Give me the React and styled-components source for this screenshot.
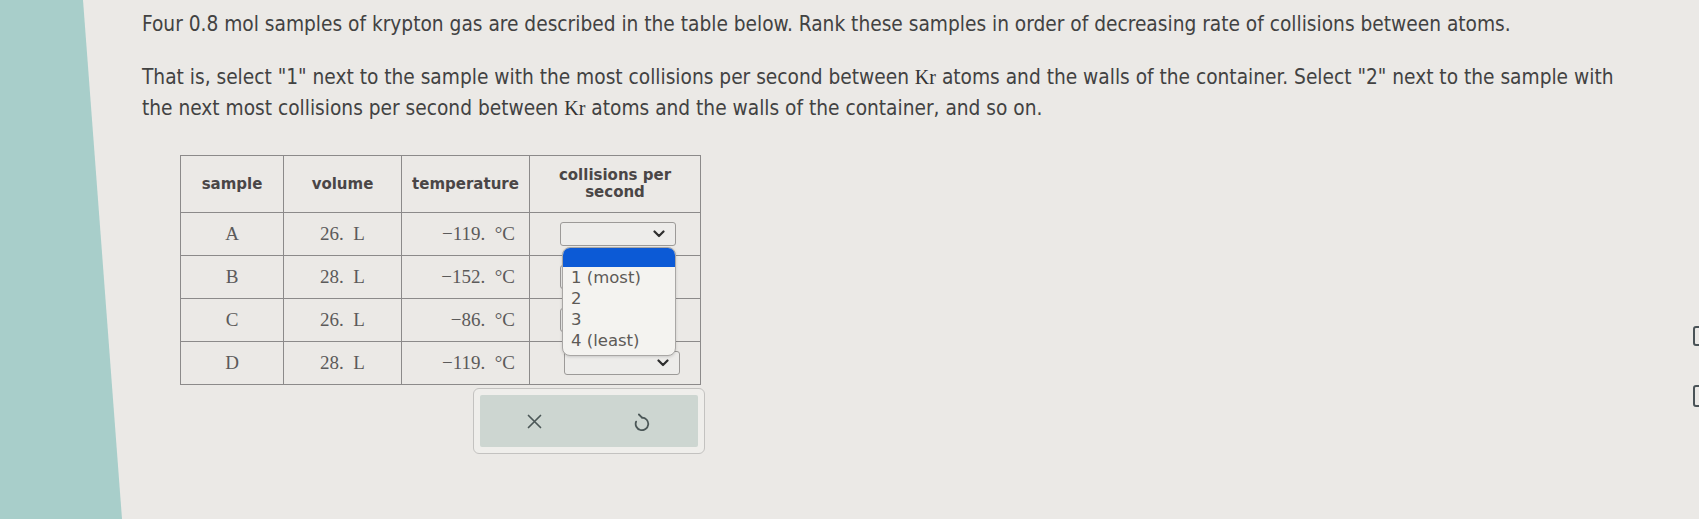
import React from "react";
import styled, { createGlobalStyle } from "styled-components";

const Global = createGlobalStyle`
  html, body { margin: 0; padding: 0; }
  body {
    background: #ebe9e6;
    width: 1699px;
    height: 519px;
    overflow: hidden;
  }
`;

const Page = styled.div`
  display: flex;
  width: 1699px;
  height: 519px;
  position: relative;
  overflow: hidden;
`;

const SideStrip = styled.div`
  flex: 0 0 122px;
  height: 100%;
  background: #a8ceca;
  clip-path: polygon(0 0, 83px 0, 122px 100%, 0 100%);
`;

const Main = styled.main`
  flex: 1;
  padding: 9px 0 0 20px;
  display: flex;
  flex-direction: column;
`;

const Para = styled.p`
  margin: 0 0 ${(p) => p.$gap || 0}px 0;
  max-width: 1490px;
  font-family: "DejaVu Sans Condensed", "DejaVu Sans", sans-serif;
  font-stretch: condensed;
  font-size: 20.7px;
  line-height: 31px;
  color: #424242;
`;

const Chem = styled.span`
  font-family: "Liberation Serif", serif;
  font-size: 20px;
  line-height: 1;
  color: #333;
`;

const Block = styled.div`
  display: flex;
  flex-direction: column;
  align-items: flex-end;
  align-self: flex-start;
  margin-left: 38px;
`;

const Table = styled.table`
  border-collapse: collapse;
  border: 1px solid #8c8a8a;
`;

const Col = styled.col`
  width: ${(p) => p.$w}px;
`;

const Th = styled.th`
  height: 56px;
  border: 1px solid #8c8a8a;
  padding: 0 8px;
  font-family: "DejaVu Sans", sans-serif;
  font-weight: bold;
  font-size: 15px;
  line-height: 17px;
  color: #4a4646;
  text-align: center;
  vertical-align: middle;
`;

const Td = styled.td`
  height: 42px;
  border: 1px solid #8c8a8a;
  padding: 0 ${(p) => (p.$align === "right" ? 14 : 4)}px 0 4px;
  font-family: "Liberation Serif", serif;
  font-size: 19px;
  color: #5b5a5a;
  text-align: ${(p) => p.$align || "center"};
  vertical-align: middle;
  white-space: pre;
  position: relative;
`;

const SelectWrap = styled.div`
  position: relative;
  width: 116px;
  margin: 0 auto;
  left: ${(p) => p.$shift || 0}px;
`;

const SelectBox = styled.div`
  height: 22px;
  border: 1px solid #9c9a98;
  border-radius: 3px;
  background: #edecea;
  display: flex;
  align-items: center;
  justify-content: flex-end;
  padding-right: 10px;
  color: #333;
`;

const Listbox = styled.ul`
  position: absolute;
  top: 25px;
  left: 2px;
  width: 112px;
  margin: 0;
  padding: 0 0 4px;
  list-style: none;
  background: #f4f3f0;
  border: 1px solid #a9a7a5;
  border-radius: 8px;
  overflow: hidden;
  z-index: 2;
  box-shadow: 0 1px 3px rgba(0, 0, 0, 0.15);
`;

const Option = styled.li`
  height: ${(p) => (p.$blank ? 19 : 21)}px;
  line-height: 21px;
  padding-left: 8px;
  background: ${(p) => (p.$active ? "#0c5ad6" : "transparent")};
  font-family: "DejaVu Sans", sans-serif;
  font-size: 16.5px;
  color: #5d5a57;
  text-align: left;
`;

const Actions = styled.div`
  margin-top: 3px;
  width: 232px;
  height: 66px;
  box-sizing: border-box;
  padding: 6px;
  border: 1px solid #c3c2c0;
  border-radius: 6px;
  background: #efeeeb;
  margin-right: -4px;
`;

const ActionInner = styled.div`
  height: 100%;
  background: #cdd6d1;
  border-radius: 2px;
  display: grid;
  grid-template-columns: 1fr 1fr;
  align-items: center;
  justify-items: center;
  color: #4b5757;
`;

const IconButton = styled.button`
  border: 0;
  background: none;
  padding: 0;
  color: inherit;
  display: flex;
  margin-left: ${(p) => p.$ml || 0}px;
`;

const EdgeMark = styled.div`
  position: absolute;
  right: -10px;
  top: ${(p) => p.$top}px;
  width: 12px;
  height: ${(p) => p.$h}px;
  border: 2px solid #4a5357;
  border-radius: 3px;
`;

const Chevron = () => (
  <svg width="12" height="8" viewBox="0 0 12 8">
    <path d="M1.5 1.5 L6 6 L10.5 1.5" fill="none" stroke="#2e2e2e" strokeWidth="2.2" strokeLinecap="round" strokeLinejoin="round" />
  </svg>
);

const XIcon = () => (
  <svg width="15" height="15" viewBox="0 0 15 15">
    <path d="M1.5 1.5 L13.5 13.5 M13.5 1.5 L1.5 13.5" stroke="currentColor" strokeWidth="1.7" strokeLinecap="round" />
  </svg>
);

const UndoIcon = () => (
  <svg width="18" height="19" viewBox="0 0 18 19">
    <path d="M9 5.6 A6.3 6.3 0 1 1 3.1 9.6" fill="none" stroke="currentColor" strokeWidth="1.8" strokeLinecap="round" />
    <path d="M5.9 2.5 L9 5.6" fill="none" stroke="currentColor" strokeWidth="1.8" strokeLinecap="round" />
  </svg>
);

const rows = [
  { s: "A", v: "26.  L", t: "\u2212119.  \u00b0C" },
  { s: "B", v: "28.  L", t: "\u2212152.  \u00b0C" },
  { s: "C", v: "26.  L", t: "\u221286.  \u00b0C" },
  { s: "D", v: "28.  L", t: "\u2212119.  \u00b0C" },
];

export default function App() {
  return (
    <>
      <Global />
      <Page>
        <SideStrip />
        <Main>
          <Para $gap={22}>
            Four 0.8 mol samples of krypton gas are described in the table below. Rank these samples in order of
            decreasing rate of collisions between atoms.
          </Para>
          <Para $gap={31}>
            That is, select "1" next to the sample with the most collisions per second between <Chem>Kr</Chem> atoms
            and the walls of the container. Select "2" next to the sample with the next most collisions per second
            between <Chem>Kr</Chem> atoms and the walls of the container, and so on.
          </Para>
          <Block>
            <Table>
              <colgroup>
                <Col $w={103} />
                <Col $w={118} />
                <Col $w={128} />
                <Col $w={171} />
              </colgroup>
              <thead>
                <tr>
                  <Th>sample</Th>
                  <Th>volume</Th>
                  <Th>temperature</Th>
                  <Th>
                    collisions per
                    <br />
                    second
                  </Th>
                </tr>
              </thead>
              <tbody>
                {rows.map((r, i) => (
                  <tr key={r.s}>
                    <Td>{r.s}</Td>
                    <Td>{r.v}</Td>
                    <Td $align="right">{r.t}</Td>
                    <Td>
                      <SelectWrap $shift={i === 3 ? 7 : 3}>
                        <SelectBox>
                          <Chevron />
                        </SelectBox>
                        {i === 0 && (
                          <Listbox>
                            <Option $active $blank />
                            <Option>1 (most)</Option>
                            <Option>2</Option>
                            <Option>3</Option>
                            <Option>4 (least)</Option>
                          </Listbox>
                        )}
                      </SelectWrap>
                    </Td>
                  </tr>
                ))}
              </tbody>
            </Table>
            <Actions>
              <ActionInner>
                <IconButton $ml={0} aria-label="clear">
                  <XIcon />
                </IconButton>
                <IconButton $ml={-4} aria-label="undo">
                  <UndoIcon />
                </IconButton>
              </ActionInner>
            </Actions>
          </Block>
        </Main>
        <EdgeMark $top={326} $h={16} />
        <EdgeMark $top={385} $h={18} />
      </Page>
    </>
  );
}
